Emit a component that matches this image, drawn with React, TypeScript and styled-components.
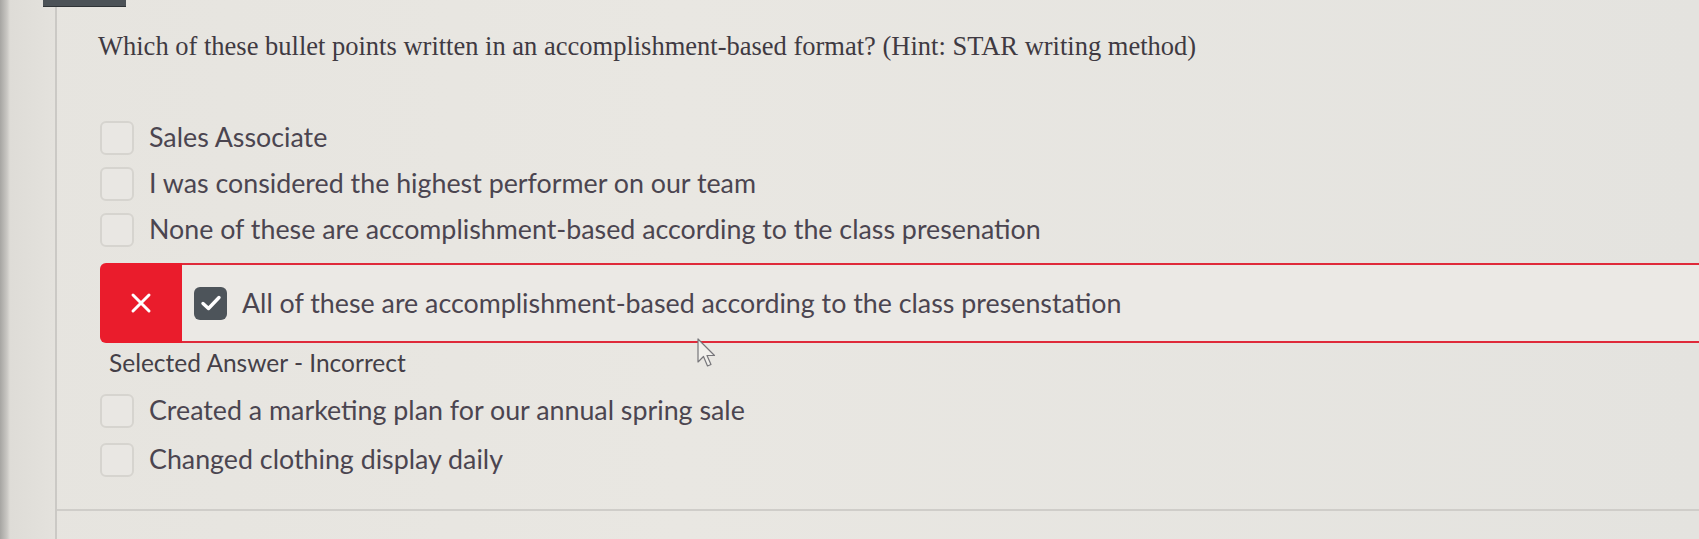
import React from 'react';
import styled, { createGlobalStyle } from 'styled-components';

const GlobalStyle = createGlobalStyle`
    html, body {
        margin: 0;
        padding: 0;
        background: #e8e6e1;
    }
    body {
        width: 1699px;
        height: 539px;
        overflow: hidden;
        font-family: Lato, 'Open Sans', sans-serif;
    }
`;

interface Answer {
    id: string;
    text: string;
}

const topAnswers: Answer[] = [
    { id: 'a1', text: 'Sales Associate' },
    { id: 'a2', text: 'I was considered the highest performer on our team' },
    { id: 'a3', text: 'None of these are accomplishment-based according to the class presenation' },
];

const bottomAnswers: Answer[] = [
    { id: 'a5', text: 'Created a marketing plan for our annual spring sale' },
    { id: 'a6', text: 'Changed clothing display daily' },
];

function App() {
    return (
        <>
            <GlobalStyle />
            <Page>
                <TopTab />
                <Rail />
                <Main>
                    <Question>
                        Which of these bullet points written in an accomplishment-based format? (Hint: STAR
                        writing method)
                    </Question>
                    <AnswerList $gap={13} $top={59}>
                        {topAnswers.map((answer) => (
                            <AnswerRow key={answer.id}>
                                <Checkbox />
                                <AnswerText>{answer.text}</AnswerText>
                            </AnswerRow>
                        ))}
                    </AnswerList>
                    <WrongRow>
                        <WrongMark>
                            <svg width="22" height="22" viewBox="0 0 22 22">
                                <path d="M3 3 L19 19 M19 3 L3 19" stroke="#fff" strokeWidth="3" strokeLinecap="round" />
                            </svg>
                        </WrongMark>
                        <WrongBody>
                            <CheckedBox>
                                <svg width="22" height="18" viewBox="0 0 22 18">
                                    <path
                                        d="M3 9.5 L8.5 14.5 L19 3.5"
                                        fill="none"
                                        stroke="#fff"
                                        strokeWidth="3.4"
                                        strokeLinecap="round"
                                        strokeLinejoin="round"
                                    />
                                </svg>
                            </CheckedBox>
                            <AnswerText>
                                All of these are accomplishment-based according to the class presenstation
                            </AnswerText>
                        </WrongBody>
                    </WrongRow>
                    <ResultLabel>Selected Answer - Incorrect</ResultLabel>
                    <AnswerList $gap={16} $top={0}>
                        {bottomAnswers.map((answer) => (
                            <AnswerRow key={answer.id}>
                                <Checkbox />
                                <AnswerText>{answer.text}</AnswerText>
                            </AnswerRow>
                        ))}
                    </AnswerList>
                    <Footer />
                </Main>
                <Cursor>
                    <svg width="20" height="31" viewBox="0 0 20 31">
                        <path
                            d="M1 1 L1 24 L6.5 18.5 L10.5 28 L14 26.5 L10 17.5 L17.5 17.5 Z"
                            fill="#f1f0ec"
                            stroke="#77767a"
                            strokeWidth="1.2"
                            strokeLinejoin="round"
                        />
                    </svg>
                </Cursor>
            </Page>
        </>
    );
}

export default App;

const Page = styled.div`
    position: relative;
    display: flex;

    width: 1699px;
    height: 539px;

    background: linear-gradient(90deg, #e6e4df 0%, #e9e7e2 40%, #e4e3df 100%);
    color: #4b4550;
`;

const TopTab = styled.div`
    position: absolute;
    top: 0;
    left: 43px;

    width: 83px;
    height: 6px;

    background: #4c5257;
    border-bottom: 1px solid #2f3336;
`;

const Rail = styled.div`
    flex: 0 0 55px;

    background: linear-gradient(90deg, #a6a5a2 0px, #c9c7c3 7px, #dedcd7 10px, #e4e2dd 100%);
    border-right: 2px solid #cbc9c5;
`;

const Main = styled.div`
    flex: 1;

    display: flex;
    flex-direction: column;

    padding-top: 30px;
    padding-left: 43px;
`;

const Question = styled.h1`
    margin: 0 0 0 -2px;

    font-family: 'Liberation Serif', 'Times New Roman', serif;
    font-size: 26.5px;
    font-weight: normal;
    line-height: 32px;
    color: #3f3a42;
`;

const AnswerList = styled.div<{ $gap: number; $top: number }>`
    display: flex;
    flex-direction: column;
    gap: ${(p) => p.$gap}px;

    margin-top: ${(p) => p.$top}px;
`;

const AnswerRow = styled.div`
    display: flex;
    align-items: center;
    gap: 15px;

    height: 33px;
`;

const Checkbox = styled.div`
    flex: 0 0 auto;

    width: 30px;
    height: 30px;

    border: 2px solid #d6d4cf;
    border-radius: 6px;
    background: #e9e7e3;
`;

const AnswerText = styled.span`
    font-size: 26.8px;
    line-height: 33px;
    color: #4b4550;
    white-space: nowrap;
`;

const WrongRow = styled.div`
    display: flex;

    height: 80px;
    margin-top: 17px;
`;

const WrongMark = styled.div`
    flex: 0 0 82px;

    display: flex;
    align-items: center;
    justify-content: center;

    background: #ea1c2c;
    border-radius: 6px 0 0 6px;
`;

const WrongBody = styled.div`
    flex: 1;

    display: flex;
    align-items: center;
    gap: 15px;

    padding-left: 12px;

    background: #ebe9e5;
    border-top: 2px solid #df2a3a;
    border-bottom: 2px solid #df2a3a;
`;

const CheckedBox = styled.div`
    flex: 0 0 auto;

    display: flex;
    align-items: center;
    justify-content: center;

    width: 33px;
    height: 33px;

    background: #4d545a;
    border-radius: 6px;
`;

const ResultLabel = styled.div`
    margin: 5px 0 16px 9px;

    font-size: 24.5px;
    line-height: 30px;
    color: #443f47;
`;

const Footer = styled.div`
    margin-top: auto;
    margin-left: -43px;
    height: 28px;

    border-top: 2px solid #cfcdc9;
`;

const Cursor = styled.div`
    position: absolute;
    top: 338px;
    left: 697px;

    width: 20px;
    height: 31px;
`;
